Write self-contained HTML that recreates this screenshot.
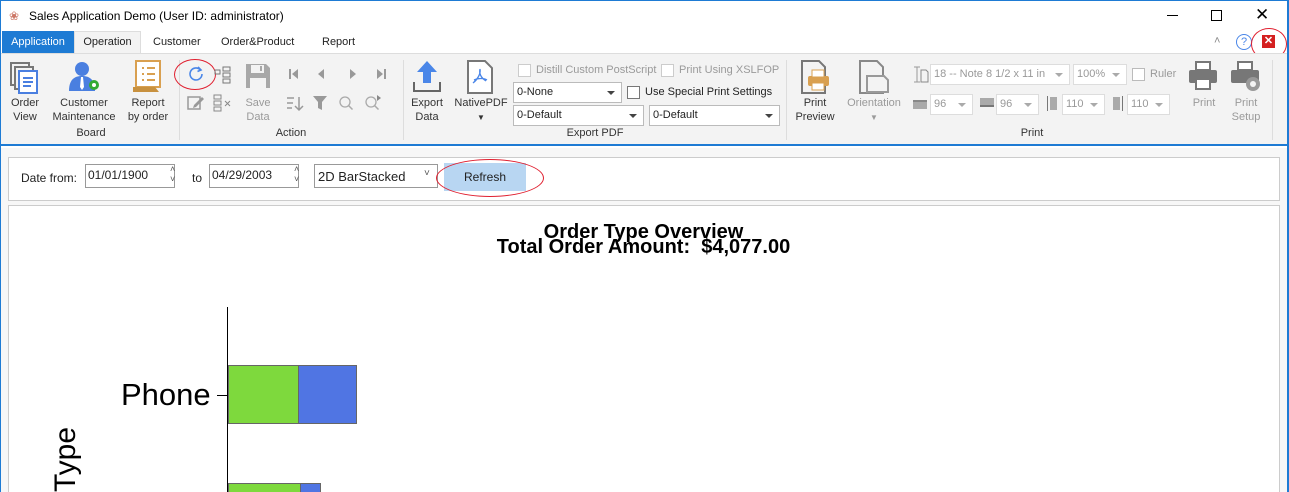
<!DOCTYPE html>
<html><head><meta charset="utf-8"><style>
*{margin:0;padding:0;box-sizing:border-box}
html,body{width:1289px;height:492px;overflow:hidden}
body{background:#fff;font-family:"Liberation Sans",sans-serif;font-size:12px;color:#222;position:relative}
.a{position:absolute}
.t{font-size:11px;color:#333;text-align:center;line-height:14px}
.g{color:#9a9a9a}
.cb{position:absolute;width:13px;height:13px;border:1px solid #aaa;background:#fff}
.dd{position:absolute;height:21px;border:1px solid #bbb;background:#fff;font-size:11px;line-height:19px;padding-left:3px}
.dd:after{content:"";position:absolute;right:6px;top:8px;border:4px solid transparent;border-top:4px solid #444;border-bottom:0}
.gd{border-color:#ddd;color:#999}
.gd:after{border-top-color:#aaa}
</style></head><body>
<div class="a" style="left:0;top:0;width:1289px;height:492px;border-left:1px solid #1e7bd4;border-right:2px solid #1e7bd4;border-top:1px solid #1e7bd4"></div>
<div class="a" style="left:9px;top:9px;font-size:12px;color:#c76">&#10048;</div>
<div class="a" style="left:29px;top:9px;font-size:12px;color:#000">Sales Application Demo (User ID: administrator)</div>
<div class="a" style="left:1167px;top:15px;width:11px;height:1px;background:#000"></div>
<div class="a" style="left:1211px;top:10px;width:11px;height:11px;border:1px solid #000"></div>
<div class="a" style="left:1255px;top:5px;font-size:17px;color:#000">&#x2715;</div>
<div class="a" style="left:2px;top:31px;width:72px;height:22px;background:#1e7bd4;color:#fff;font-size:11px;line-height:22px;text-align:center">Application</div>
<div class="a" style="left:74px;top:31px;width:67px;height:23px;background:#f3f3f3;border:1px solid #ddd;border-bottom:0;font-size:11px;line-height:21px;text-align:center">Operation</div>
<div class="a" style="left:153px;top:36px;font-size:11px">Customer</div>
<div class="a" style="left:221px;top:36px;font-size:11px">Order&amp;Product</div>
<div class="a" style="left:322px;top:36px;font-size:11px">Report</div>
<div class="a" style="left:1214px;top:35px;color:#888;font-size:11px">&#x2c4;</div>
<div class="a" style="left:1236px;top:34px;width:16px;height:16px;border:1px solid #4a86e8;border-radius:50%;color:#4a86e8;font-size:11px;text-align:center;line-height:14px">?</div>
<div class="a" style="left:1262px;top:35px;width:13px;height:13px;background:#d42020;color:#fff;font-size:11px;line-height:13px;text-align:center;font-weight:bold">&#x2715;</div>
<div class="a" style="left:1251px;top:28px;width:36px;height:32px;border:1px solid #e02030;border-radius:50%"></div>
<div class="a" style="left:1px;top:53px;width:1286px;height:93px;background:#f3f3f3;border-top:1px solid #ddd;border-bottom:2px solid #1e7bd4"></div>
<svg class="a" style="left:10px;top:60px" width="30" height="34"><rect x="1" y="3" width="18" height="22" fill="none" stroke="#777" stroke-width="2"/><rect x="5" y="7" width="18" height="22" fill="#f3f3f3" stroke="#777" stroke-width="2"/><rect x="9" y="11" width="18" height="22" fill="#fff" stroke="#4a7fe0" stroke-width="2"/><path d="M13 18h10M13 22h10M13 26h8" stroke="#4a7fe0" stroke-width="2"/></svg>
<div class="a t" style="left:4px;top:96px;width:42px">Order<br>View</div>
<svg class="a" style="left:66px;top:60px" width="36" height="34"><circle cx="16" cy="9" r="7" fill="#4a7fe0"/><path d="M3 31c0-12 6-15 13-15s13 3 13 15z" fill="#4a7fe0"/><path d="M15 17l2 0 1 10-2 3-2-3z" fill="#fff"/><circle cx="28" cy="25" r="5" fill="#3a3" /><circle cx="28" cy="25" r="2" fill="#fff"/></svg>
<div class="a t" style="left:52px;top:96px;width:64px">Customer<br>Maintenance</div>
<svg class="a" style="left:132px;top:60px" width="32" height="34"><rect x="4" y="1" width="24" height="26" fill="#fff" stroke="#d9a050" stroke-width="2"/><path d="M10 8h2M15 8h8M10 14h2M15 14h8M10 20h2M15 20h8" stroke="#d9a050" stroke-width="2"/><path d="M1 27h22l4 5H1z" fill="#c8913f"/></svg>
<div class="a t" style="left:125px;top:96px;width:46px">Report<br>by order</div>
<div class="a t" style="left:70px;top:126px;width:42px">Board</div>
<div class="a" style="left:179px;top:60px;width:1px;height:80px;background:#ddd"></div>
<svg class="a" style="left:186px;top:64px" width="20" height="20"><path d="M16 10a6 6 0 1 1-2-4.5" fill="none" stroke="#4a86e8" stroke-width="1.6"/><path d="M12 3l3 3-3.5 1.5" fill="none" stroke="#4a86e8" stroke-width="1.6"/></svg>
<div class="a" style="left:174px;top:59px;width:42px;height:31px;border:1px solid #e02030;border-radius:50%"></div>
<svg class="a" style="left:214px;top:66px" width="18" height="18"><rect x="1" y="4" width="5" height="4" fill="none" stroke="#777"/><rect x="9" y="1" width="7" height="4" fill="none" stroke="#777"/><rect x="9" y="7" width="7" height="4" fill="none" stroke="#777"/><rect x="9" y="13" width="7" height="4" fill="none" stroke="#777"/></svg>
<svg class="a" style="left:244px;top:62px" width="28" height="28"><path d="M2 2h20l4 4v20H2z" fill="#a8a8a8"/><rect x="7" y="3" width="13" height="8" fill="#f3f3f3"/><rect x="16" y="4" width="2" height="5" fill="#a8a8a8"/><rect x="6" y="16" width="16" height="10" fill="#f3f3f3"/></svg>
<div class="a t g" style="left:240px;top:96px;width:36px">Save<br>Data</div>
<div class="a" style="left:289px;top:69px;width:2px;height:10px;background:#999"></div><div class="a" style="left:292px;top:69px;border:5px solid transparent;border-right:6px solid #999;border-left:0"></div>
<div class="a" style="left:318px;top:69px;border:5px solid transparent;border-right:6px solid #999;border-left:0"></div>
<div class="a" style="left:350px;top:69px;border:5px solid transparent;border-left:6px solid #999;border-right:0"></div>
<div class="a" style="left:377px;top:69px;border:5px solid transparent;border-left:6px solid #999;border-right:0"></div><div class="a" style="left:384px;top:69px;width:2px;height:10px;background:#999"></div>
<svg class="a" style="left:186px;top:94px" width="20" height="18"><rect x="2" y="3" width="12" height="12" fill="none" stroke="#999" stroke-width="1.5"/><path d="M8 11l8-8 2 2-8 8-3 1z" fill="#999"/></svg>
<svg class="a" style="left:212px;top:94px" width="22" height="18"><rect x="2" y="1" width="7" height="4" fill="none" stroke="#888"/><rect x="2" y="7" width="7" height="4" fill="none" stroke="#888"/><rect x="2" y="13" width="7" height="4" fill="none" stroke="#888"/><path d="M13 7l5 5M18 7l-5 5" stroke="#888"/></svg>
<svg class="a" style="left:286px;top:95px" width="18" height="18"><path d="M1 3h7M1 8h6M1 13h5" stroke="#999" stroke-width="1.5"/><path d="M13 2v13M9 11l4 4 4-4" fill="none" stroke="#999" stroke-width="1.5"/></svg>
<svg class="a" style="left:312px;top:95px" width="16" height="16"><path d="M1 1h14l-5 6v8l-4-2V7z" fill="#999"/></svg>
<svg class="a" style="left:338px;top:95px" width="16" height="16"><circle cx="7" cy="7" r="5" fill="none" stroke="#aaa" stroke-width="1.3"/><path d="M10.5 10.5l4 4" stroke="#aaa" stroke-width="1.5"/></svg>
<svg class="a" style="left:364px;top:94px" width="18" height="18"><circle cx="7" cy="8" r="5" fill="none" stroke="#aaa" stroke-width="1.3"/><path d="M10.5 11.5l4 4" stroke="#aaa" stroke-width="1.5"/><path d="M13 1l4 3-4 3z" fill="#888"/></svg>
<div class="a t" style="left:270px;top:126px;width:42px">Action</div>
<div class="a" style="left:403px;top:60px;width:1px;height:80px;background:#ddd"></div>
<svg class="a" style="left:412px;top:60px" width="30" height="34"><path d="M15 1l10 11h-6v11h-8V12H5z" fill="#4a86e8"/><path d="M2 22v9h26v-9" fill="none" stroke="#666" stroke-width="2"/></svg>
<div class="a t" style="left:406px;top:96px;width:42px">Export<br>Data</div>
<svg class="a" style="left:466px;top:60px" width="28" height="34"><path d="M2 1h17l7 7v25H2z" fill="#fff" stroke="#777" stroke-width="2"/><path d="M14 9c-1 4 0 8 6 12M14 9c1 5-3 11-7 14M8 20c4-2 10-2 13 0" fill="none" stroke="#4a86e8" stroke-width="1.3"/></svg>
<div class="a t" style="left:452px;top:96px;width:58px">NativePDF<br><span style="font-size:8px">&#9660;</span></div>
<div class="cb" style="left:518px;top:64px;border-color:#ccc"></div><div class="a g" style="left:536px;top:64px;font-size:11px">Distill Custom PostScript</div>
<div class="cb" style="left:661px;top:64px;border-color:#ccc"></div><div class="a g" style="left:679px;top:64px;font-size:11px">Print Using XSLFOP</div>
<div class="dd" style="left:513px;top:82px;width:109px">0-None</div>
<div class="cb" style="left:627px;top:86px;border-color:#777"></div><div class="a" style="left:645px;top:86px;font-size:11px">Use Special Print Settings</div>
<div class="dd" style="left:513px;top:105px;width:131px">0-Default</div>
<div class="dd" style="left:649px;top:105px;width:131px">0-Default</div>
<div class="a t" style="left:560px;top:126px;width:70px">Export PDF</div>
<div class="a" style="left:786px;top:60px;width:1px;height:80px;background:#ddd"></div>
<svg class="a" style="left:800px;top:60px" width="32" height="34"><path d="M2 1h17l6 6v26H2z" fill="none" stroke="#777" stroke-width="2"/><rect x="8" y="16" width="21" height="10" rx="2" fill="#d9a050"/><rect x="12" y="10" width="12" height="7" fill="#fff" stroke="#d9a050"/><rect x="12" y="23" width="12" height="7" fill="#fff" stroke="#d9a050"/></svg>
<div class="a t" style="left:792px;top:96px;width:46px">Print<br>Preview</div>
<svg class="a" style="left:858px;top:60px" width="32" height="34"><path d="M2 1h17l6 6v26H2z" fill="none" stroke="#888" stroke-width="2"/><path d="M9 16h17l4 4v12H9z" fill="#f3f3f3" stroke="#999" stroke-width="2"/></svg>
<div class="a t g" style="left:844px;top:96px;width:60px">Orientation<br><span style="font-size:8px">&#9660;</span></div>
<svg class="a" style="left:913px;top:65px" width="16" height="18"><path d="M1 2h6M4 2v15M1 17h6" stroke="#999"/><path d="M8 5h5l2 2v10H8z" fill="none" stroke="#888"/></svg>
<div class="dd gd" style="left:930px;top:64px;width:140px">18 -- Note 8 1/2 x 11 in</div>
<div class="dd gd" style="left:1073px;top:64px;width:54px">100%</div>
<div class="cb" style="left:1132px;top:68px;border-color:#bbb"></div><div class="a g" style="left:1150px;top:68px;font-size:11px">Ruler</div>
<div class="a" style="left:913px;top:100px;width:14px;height:9px;background:#aaa;border-top:2px solid #888"></div>
<div class="dd gd" style="left:930px;top:94px;width:43px">96</div>
<div class="a" style="left:980px;top:98px;width:14px;height:9px;background:#aaa;border-bottom:2px solid #777"></div>
<div class="dd gd" style="left:996px;top:94px;width:43px">96</div>
<div class="a" style="left:1047px;top:96px;width:1px;height:15px;background:#777"></div><div class="a" style="left:1050px;top:97px;width:7px;height:13px;background:#aaa"></div>
<div class="dd gd" style="left:1062px;top:94px;width:43px">110</div>
<div class="a" style="left:1113px;top:97px;width:7px;height:13px;background:#aaa"></div><div class="a" style="left:1122px;top:96px;width:1px;height:15px;background:#777"></div>
<div class="dd gd" style="left:1127px;top:94px;width:43px">110</div>
<div class="a t" style="left:1012px;top:126px;width:40px">Print</div>
<svg class="a" style="left:1188px;top:60px" width="30" height="32"><rect x="8" y="2" width="14" height="8" fill="#fff" stroke="#777" stroke-width="2"/><rect x="1" y="10" width="28" height="13" rx="2" fill="#777"/><rect x="8" y="19" width="14" height="10" fill="#fff" stroke="#777" stroke-width="2"/></svg>
<div class="a t g" style="left:1186px;top:96px;width:36px">Print</div>
<svg class="a" style="left:1230px;top:60px" width="32" height="32"><rect x="8" y="2" width="14" height="8" fill="#fff" stroke="#777" stroke-width="2"/><rect x="1" y="10" width="28" height="13" rx="2" fill="#777"/><circle cx="23" cy="24" r="7" fill="#999"/><circle cx="23" cy="24" r="3" fill="#f3f3f3"/></svg>
<div class="a t g" style="left:1226px;top:96px;width:40px">Print<br>Setup</div>
<div class="a" style="left:1272px;top:60px;width:1px;height:80px;background:#ddd"></div>
<div class="a" style="left:1px;top:148px;width:1286px;height:344px;background:#f7f7f7"></div>
<div class="a" style="left:8px;top:157px;width:1272px;height:44px;background:#fff;border:1px solid #ccc"></div>
<div class="a" style="left:21px;top:171px;font-size:12px">Date from:</div>
<div class="a" style="left:85px;top:164px;width:90px;height:24px;border:1px solid #999;background:#fff;font-size:12px;padding:3px 2px">01/01/1900</div>
<div class="a" style="left:170px;top:164px;font-size:9px;line-height:10px;color:#555">&#x2c4;<br>&#x2c5;</div>
<div class="a" style="left:192px;top:171px">to</div>
<div class="a" style="left:209px;top:164px;width:90px;height:24px;border:1px solid #999;background:#fff;font-size:12px;padding:3px 2px">04/29/2003</div>
<div class="a" style="left:294px;top:164px;font-size:9px;line-height:10px;color:#555">&#x2c4;<br>&#x2c5;</div>
<div class="a" style="left:314px;top:164px;width:124px;height:24px;border:1px solid #999;background:#fff;font-size:13px;padding:4px 3px">2D BarStacked</div>
<div class="a" style="left:424px;top:168px;font-size:10px;color:#555">&#x2c5;</div>
<div class="a" style="left:444px;top:163px;width:82px;height:28px;background:#b8d6f2;font-size:12px;text-align:center;line-height:28px">Refresh</div>
<div class="a" style="left:436px;top:159px;width:108px;height:38px;border:1px solid #e02030;border-radius:50%"></div>
<div class="a" style="left:8px;top:205px;width:1272px;height:287px;background:#fff;border:1px solid #ccc;border-bottom:0"></div>
<div class="a" style="left:0;top:222px;width:1287px;text-align:center;font-weight:bold;font-size:20px;line-height:20px;color:#000">Order Type Overview</div>
<div class="a" style="left:0;top:237px;width:1287px;text-align:center;font-weight:bold;font-size:20px;line-height:20px;color:#000">Total Order Amount:&nbsp; $4,077.00</div>
<div class="a" style="left:227px;top:307px;width:1px;height:190px;background:#000"></div>
<div class="a" style="left:217px;top:395px;width:10px;height:1px;background:#000"></div>
<div class="a" style="left:121px;top:377px;font-size:31px;color:#000">Phone</div>
<div class="a" style="left:228px;top:365px;width:71px;height:59px;background:#7ed93d;border:1px solid #666"></div>
<div class="a" style="left:298px;top:365px;width:59px;height:59px;background:#5075e3;border:1px solid #666"></div>
<div class="a" style="left:228px;top:483px;width:73px;height:20px;background:#7ed93d;border:1px solid #666"></div>
<div class="a" style="left:300px;top:483px;width:21px;height:20px;background:#5075e3;border:1px solid #666"></div>
<div class="a" style="left:48px;top:430px;width:40px;height:70px"><div style="position:absolute;left:0;top:0;transform:rotate(-90deg) translate(-62px,0);transform-origin:0 0;font-size:30px;color:#000;white-space:nowrap;line-height:36px">Type</div></div>
</body></html>
